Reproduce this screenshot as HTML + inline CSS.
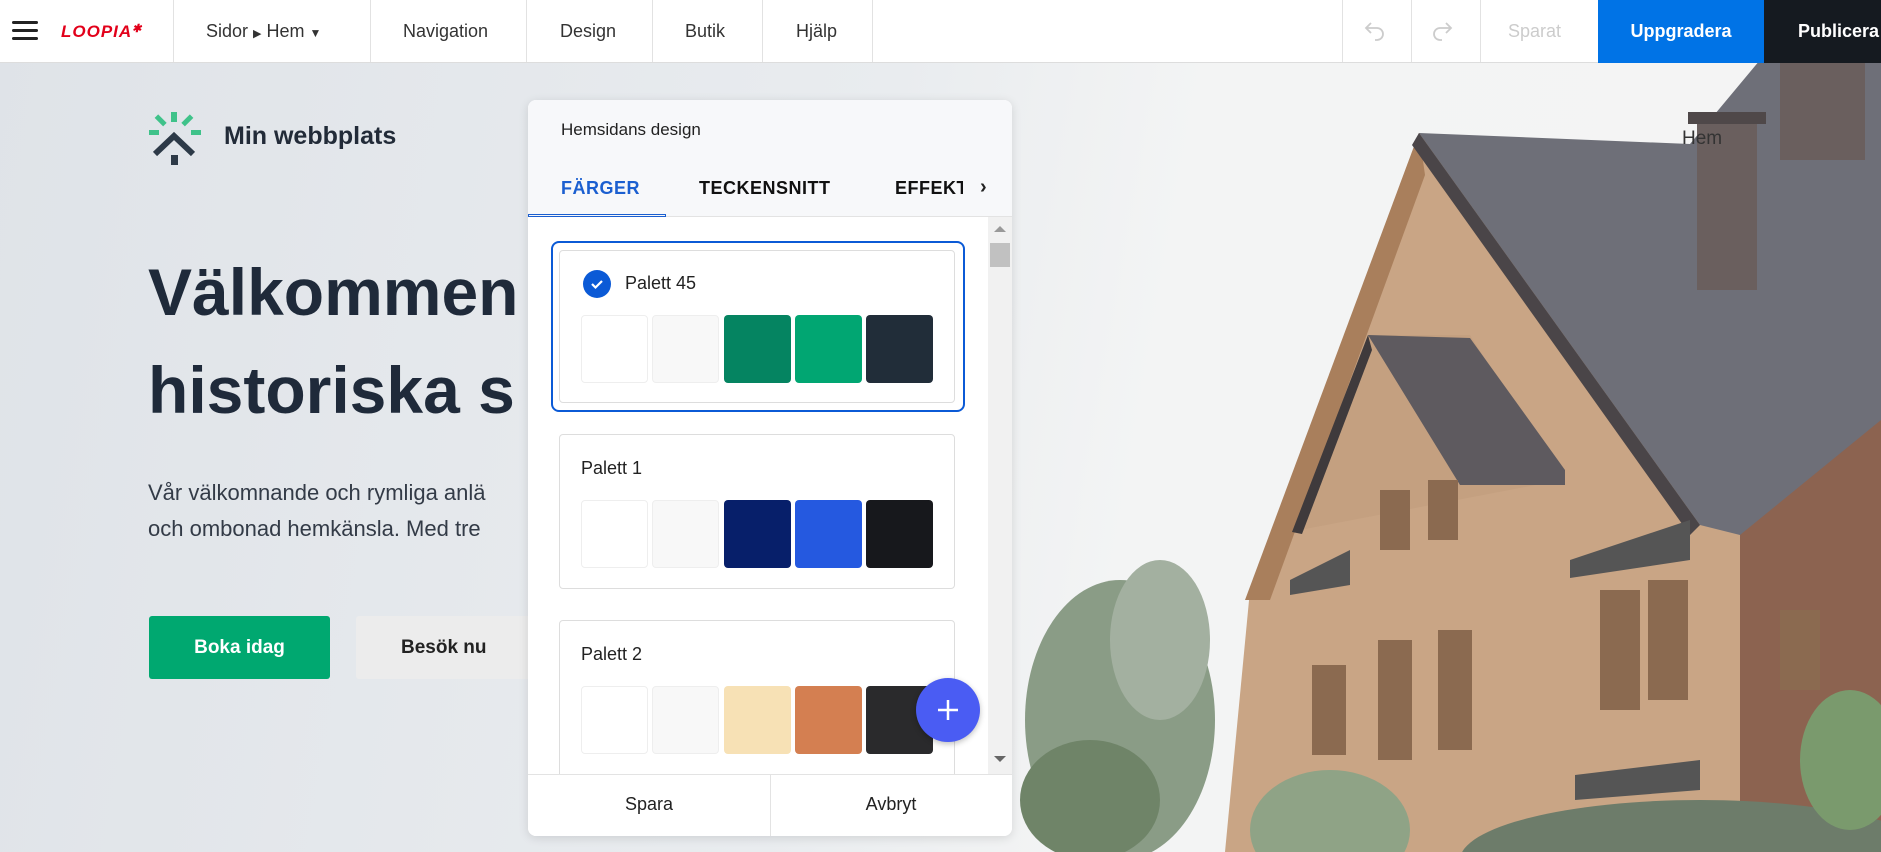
<!DOCTYPE html>
<html><head><meta charset="utf-8"><style>
*{box-sizing:border-box;margin:0;padding:0}
body{width:1881px;height:852px;overflow:hidden;position:relative;font-family:"Liberation Sans",sans-serif;background:linear-gradient(100deg,#dfe3e8 0%,#e9ecef 45%,#f3f4f4 60%,#f4f4f4 100%)}
.top{position:absolute;left:0;top:0;width:1881px;height:63px;background:#fff;border-bottom:1px solid #ddd}
.top .t{position:absolute;top:0;height:62px;line-height:62px;font-size:18px;color:#333}
.vd{position:absolute;top:0;width:1px;height:62px;background:#e2e2e2}
.abs{position:absolute}
.panel{position:absolute;left:528px;top:100px;width:484px;height:736px;background:#fff;border-radius:8px;box-shadow:0 2px 10px rgba(0,0,0,.12);overflow:hidden}
.card{position:absolute;left:31px;width:396px;border:1px solid #ddd;border-radius:4px;background:#fff}
.sw{position:absolute;width:67px;height:68px;border-radius:4px}
.pt{position:absolute;font-size:18px;color:#222}
</style></head><body>
<svg class="abs" style="left:0;top:0" width="1881" height="852">
<g>
<ellipse cx="1120" cy="720" rx="95" ry="140" fill="#8a9c86"/>
<ellipse cx="1090" cy="800" rx="70" ry="60" fill="#6f8468"/>
<ellipse cx="1160" cy="640" rx="50" ry="80" fill="#a3b0a0"/>
</g>
<polygon points="1419,133 1250,590 1225,852 1770,852 1770,480" fill="#c9a585"/>
<polygon points="1419,133 1245,600 1270,600 1425,175" fill="#a97f5c"/>
<polygon points="1740,500 1881,410 1881,852 1740,852" fill="#8c6350"/>
<polygon points="1419,133 1690,144 1760,60 1881,60 1881,420 1740,535 1700,525" fill="#6e6f78"/>
<polygon points="1419,133 1700,525 1690,535 1412,145" fill="#4a4548"/>
<rect x="1697" y="116" width="60" height="174" fill="#6a5f5e"/>
<rect x="1688" y="112" width="78" height="12" fill="#4f4849"/>
<rect x="1780" y="60" width="85" height="100" fill="#6a5f5e"/>
<polygon points="1368,335 1300,530 1562,480 1470,335" fill="#c4a080"/>
<polygon points="1368,335 1470,338 1565,470 1565,485 1460,485" fill="#5e5a5f"/>
<polygon points="1368,335 1292,532 1302,534 1372,350" fill="#3f3a3c"/>
<g fill="#8b6a50">
<rect x="1312" y="665" width="34" height="90"/><rect x="1378" y="640" width="34" height="120"/><rect x="1438" y="630" width="34" height="120"/>
<rect x="1600" y="590" width="40" height="120"/><rect x="1648" y="580" width="40" height="120"/>
<rect x="1780" y="610" width="40" height="80"/>
<rect x="1380" y="490" width="30" height="60"/><rect x="1428" y="480" width="30" height="60"/>
</g>
<g fill="#555">
<polygon points="1290,580 1350,550 1350,585 1290,595"/>
<polygon points="1570,560 1690,520 1690,560 1570,578"/>
<polygon points="1575,775 1700,760 1700,790 1575,800"/>
</g>
<ellipse cx="1700" cy="860" rx="240" ry="60" fill="#6d7c6a"/>
<ellipse cx="1850" cy="760" rx="50" ry="70" fill="#7a9a6d"/>
<ellipse cx="1330" cy="830" rx="80" ry="60" fill="#8fa386"/>
</svg>
<div class="abs" style="left:1682px;top:128px;font-size:19px;color:#333">Hem</div>

<div class="top">
 <div class="abs" style="left:12px;top:21px;width:26px">
  <div style="height:3px;background:#222;margin-bottom:5px;border-radius:2px"></div><div style="height:3px;background:#222;margin-bottom:5px;border-radius:2px"></div><div style="height:3px;background:#222;border-radius:2px"></div></div>
 <div class="abs" style="left:61px;top:22px;font-size:17px;font-weight:bold;font-style:italic;color:#e2001a;letter-spacing:1px">LOOPIA<span style="font-size:11px;vertical-align:top">✱</span></div>
 <div class="vd" style="left:173px"></div>
 <div class="t" style="left:206px">Sidor <span style="font-size:11px">▶</span> Hem <span style="font-size:12px">▼</span></div>
 <div class="vd" style="left:370px"></div>
 <div class="t" style="left:403px">Navigation</div>
 <div class="vd" style="left:526px"></div>
 <div class="t" style="left:560px">Design</div>
 <div class="vd" style="left:652px"></div>
 <div class="t" style="left:685px">Butik</div>
 <div class="vd" style="left:762px"></div>
 <div class="t" style="left:796px">Hjälp</div>
 <div class="vd" style="left:872px"></div>
 <div class="vd" style="left:1342px"></div>
 <svg class="abs" style="left:1363px;top:19px" width="24" height="24" fill="none" stroke="#ccc" stroke-width="1.8"><path d="M8 4 L3 9 L8 14 M3 9 H14 A6 6 0 0 1 14 21 H12"/></svg>
 <div class="vd" style="left:1411px"></div>
 <svg class="abs" style="left:1430px;top:19px" width="24" height="24" fill="none" stroke="#ccc" stroke-width="1.8"><path d="M16 4 L21 9 L16 14 M21 9 H10 A6 6 0 0 0 10 21 H12"/></svg>
 <div class="vd" style="left:1480px"></div>
 <div class="t" style="left:1508px;color:#ccc">Sparat</div>
 <div class="abs" style="left:1598px;top:0;width:166px;height:63px;background:#0073e6;color:#fff;font-weight:bold;font-size:18px;line-height:62px;text-align:center">Uppgradera</div>
 <div class="abs" style="left:1764px;top:0;width:117px;height:63px;background:#151a20;color:#fff;font-weight:bold;font-size:18px;line-height:62px;padding-left:34px">Publicera</div>
</div>

<svg class="abs" style="left:147px;top:110px" width="56" height="60">
<g fill="#3fc28a"><rect x="24" y="2" width="6" height="10"/><rect x="2" y="20" width="10" height="5"/><rect x="44" y="20" width="10" height="5"/>
<rect x="8" y="8" width="12" height="5" transform="rotate(45 14 10)"/><rect x="34" y="8" width="12" height="5" transform="rotate(-45 40 10)"/></g>
<path d="M8 44 L27 26 L46 44" fill="none" stroke="#2d3a48" stroke-width="6"/><rect x="24" y="45" width="7" height="10" fill="#2d3a48"/>
</svg>
<div class="abs" style="left:224px;top:122px;font-size:25px;font-weight:bold;color:#222b38">Min webbplats</div>
<div class="abs" style="left:148px;top:243px;font-size:66px;font-weight:bold;color:#1f2a3a;line-height:98px;white-space:nowrap">Välkommen<br>historiska s</div>
<div class="abs" style="left:148px;top:475px;font-size:22px;color:#333b47;line-height:36px;white-space:nowrap">Vår välkomnande och rymliga anlä<br>och ombonad hemkänsla. Med tre</div>
<div class="abs" style="left:149px;top:616px;width:181px;height:63px;background:#00a870;border-radius:3px;color:#fff;font-weight:bold;font-size:19px;line-height:63px;text-align:center">Boka idag</div>
<div class="abs" style="left:356px;top:616px;width:180px;height:63px;background:#ececec;border-radius:3px;color:#222;font-weight:bold;font-size:19px;line-height:63px;padding-left:45px">Besök nu</div>

<div class="panel">
 <div class="abs" style="left:0;top:0;width:484px;height:117px;background:#f7f8fa;border-bottom:1px solid #e3e3e3"></div>
 <div class="abs" style="left:33px;top:20px;font-size:17px;color:#222">Hemsidans design</div>
 <div class="abs" style="left:33px;top:78px;font-size:18px;font-weight:bold;color:#1b5fd0;letter-spacing:.5px">FÄRGER</div>
 <div class="abs" style="left:171px;top:78px;font-size:18px;font-weight:bold;color:#111;letter-spacing:.5px">TECKENSNITT</div>
 <div class="abs" style="left:367px;top:78px;font-size:18px;font-weight:bold;color:#111;letter-spacing:.5px;width:68px;overflow:hidden;white-space:nowrap">EFFEKTER</div>
 <div class="abs" style="left:452px;top:76px;font-size:20px;font-weight:bold;color:#222">›</div>
 <div class="abs" style="left:0;top:114px;width:138px;height:3px;border:1px solid #1b5fd0"></div>
 <div class="abs" style="left:460px;top:117px;width:24px;height:657px;background:#f1f1f1"></div>
 <div class="abs" style="left:466px;top:126px;width:0;height:0;border:6px solid transparent;border-bottom-color:#999;border-top:0"></div>
 <div class="abs" style="left:462px;top:143px;width:20px;height:24px;background:#c1c1c1"></div>
 <div class="abs" style="left:466px;top:656px;width:0;height:0;border:6px solid transparent;border-top-color:#666;border-bottom:0"></div>

 <div class="abs" style="left:23px;top:141px;width:414px;height:171px;border:2px solid #0b5ad6;border-radius:8px"></div>
 <div class="card" style="top:150px;height:153px">
  <div class="abs" style="left:23px;top:19px;width:28px;height:28px;border-radius:50%;background:#0b5ad6"><svg width="28" height="28"><path d="M9 14 L12.5 17.5 L19 11" fill="none" stroke="#fff" stroke-width="2.2"/></svg></div>
  <div class="pt" style="left:65px;top:22px">Palett 45</div>
  <div class="sw" style="left:21px;top:64px;border:1px solid #eee;background:#fff"></div>
  <div class="sw" style="left:92px;top:64px;border:1px solid #eee;background:#f8f8f8"></div>
  <div class="sw" style="left:164px;top:64px;background:#058461"></div>
  <div class="sw" style="left:235px;top:64px;background:#01a672"></div>
  <div class="sw" style="left:306px;top:64px;background:#212d39"></div>
 </div>
 <div class="card" style="top:334px;height:155px">
  <div class="pt" style="left:21px;top:23px">Palett 1</div>
  <div class="sw" style="left:21px;top:65px;border:1px solid #eee;background:#fff"></div>
  <div class="sw" style="left:92px;top:65px;border:1px solid #eee;background:#f8f8f8"></div>
  <div class="sw" style="left:164px;top:65px;background:#071f6a"></div>
  <div class="sw" style="left:235px;top:65px;background:#2559e0"></div>
  <div class="sw" style="left:306px;top:65px;background:#17181c"></div>
 </div>
 <div class="card" style="top:520px;height:200px">
  <div class="pt" style="left:21px;top:23px">Palett 2</div>
  <div class="sw" style="left:21px;top:65px;border:1px solid #eee;background:#fff"></div>
  <div class="sw" style="left:92px;top:65px;border:1px solid #eee;background:#f8f8f8"></div>
  <div class="sw" style="left:164px;top:65px;background:#f7e1b5"></div>
  <div class="sw" style="left:235px;top:65px;background:#d47f51"></div>
  <div class="sw" style="left:306px;top:65px;background:#2a2a2c"></div>
 </div>
 <div class="abs" style="left:388px;top:578px;width:64px;height:64px;border-radius:50%;background:#4a5cf3;box-shadow:0 2px 6px rgba(0,0,0,.25)"><svg width="64" height="64"><path d="M32 22 V42 M22 32 H42" stroke="#fff" stroke-width="2.5"/></svg></div>
 <div class="abs" style="left:0;top:674px;width:484px;height:62px;background:#fff;border-top:1px solid #e3e3e3"></div>
 <div class="abs" style="left:242px;top:674px;width:1px;height:62px;background:#e3e3e3"></div>
 <div class="abs" style="left:0;top:694px;width:242px;text-align:center;font-size:18px;color:#222">Spara</div>
 <div class="abs" style="left:242px;top:694px;width:242px;text-align:center;font-size:18px;color:#222">Avbryt</div>
</div>
</body></html>
